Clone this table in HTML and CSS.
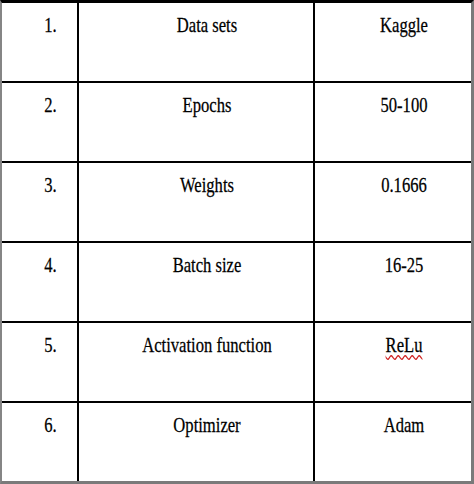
FILE: index.html
```html
<!DOCTYPE html>
<html>
<head>
<meta charset="utf-8">
<link rel="stylesheet" href="styles.css">
</head>
<body>
<table class="params">
  <tr><td class="c1"><span class="t">1.</span></td><td class="c2"><span class="t">Data sets</span></td><td class="c3"><span class="t">Kaggle</span></td></tr>
  <tr><td class="c1"><span class="t">2.</span></td><td class="c2"><span class="t">Epochs</span></td><td class="c3"><span class="t">50-100</span></td></tr>
  <tr><td class="c1"><span class="t">3.</span></td><td class="c2"><span class="t">Weights</span></td><td class="c3"><span class="t">0.1666</span></td></tr>
  <tr><td class="c1"><span class="t">4.</span></td><td class="c2"><span class="t">Batch size</span></td><td class="c3"><span class="t">16-25</span></td></tr>
  <tr><td class="c1"><span class="t">5.</span></td><td class="c2"><span class="t">Activation function</span></td><td class="c3"><span class="t spell">ReLu</span></td></tr>
  <tr class="last"><td class="c1"><span class="t">6.</span></td><td class="c2"><span class="t">Optimizer</span></td><td class="c3"><span class="t">Adam</span></td></tr>
</table>
</body>
</html>
```

FILE: styles.css
```css
html, body {
  margin: 0;
  padding: 0;
  background: #fff;
}
.params {
  border-spacing: 0;
  border-collapse: separate;
  width: 474px;
  table-layout: fixed;
  border-left: 2px solid #858585;
  border-top: 3px solid #000;
  border-right: 3px solid #7a7a7a;
  border-bottom: 3px solid #7a7a7a;
  font-family: "Liberation Serif", Tinos, "Times New Roman", serif;
  font-size: 16.6px;
  line-height: 19px;
  color: #000;
}
.params td {
  vertical-align: top;
  text-align: center;
  padding: 10px 0 0 22px;
  height: 68px;
  border-bottom: 2px solid #000;
  border-right: 2px solid #000;
  white-space: nowrap;
}
.params td.c1 { width: 53px; }
.params td.c2 { width: 212px; }
.params td.c3 { width: 134px; border-right: none; }
.params tr.last td { border-bottom: none; }
.t {
  display: inline-block;
  transform: scaleY(1.26);
  transform-origin: center top;
  -webkit-text-stroke: 0.2px #000;
}
.spell {
  text-decoration: underline wavy #d02020;
  text-decoration-thickness: 1px;
  text-underline-offset: 2px;
}
```
